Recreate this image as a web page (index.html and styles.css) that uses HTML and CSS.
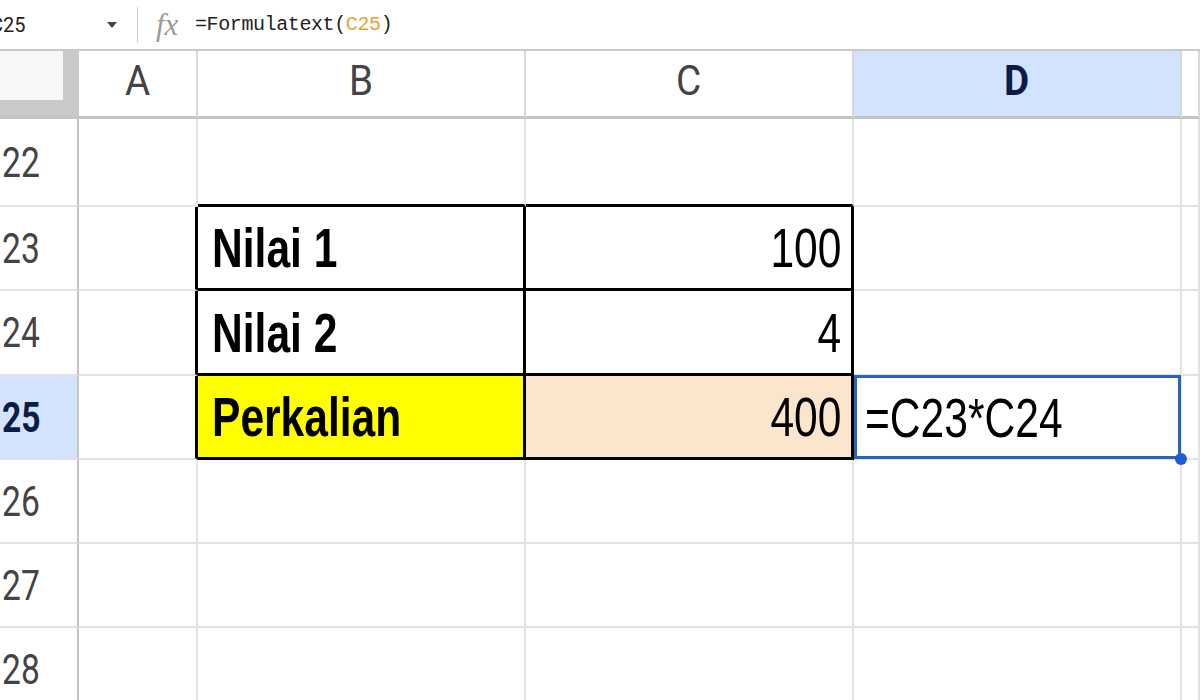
FILE: index.html
```html
<!DOCTYPE html>
<html lang="en">
<head>
    <meta charset="UTF-8">
    <meta name="viewport" content="width=device-width, initial-scale=1.0">
    <title>Formulatext</title>
    <link rel="stylesheet" href="styles.css">
</head>
<body>
    <div class="formula-bar">
        <div class="name-box">
            <span class="name">C25</span>
            <span class="caret"></span>
        </div>
        <div class="fx">fx</div>
        <div class="formula">=Formulatext(<span class="ref">C25</span>)</div>
    </div>

    <div class="sheet">
        <!-- column headers -->
        <div class="corner"><div class="corner-inner"></div></div>
        <div class="cell col-head"><span class="txt">A</span></div>
        <div class="cell col-head"><span class="txt">B</span></div>
        <div class="cell col-head"><span class="txt">C</span></div>
        <div class="cell col-head active"><span class="txt">D</span></div>
        <div class="cell col-head"></div>

        <!-- row 22 -->
        <div class="cell row-head"><span class="txt">22</span></div>
        <div class="cell"></div>
        <div class="cell black-b"></div>
        <div class="cell black-b"></div>
        <div class="cell"></div>
        <div class="cell"></div>

        <!-- row 23 -->
        <div class="cell row-head"><span class="txt">23</span></div>
        <div class="cell black-r"></div>
        <div class="cell boxed label"><span class="txt">Nilai 1</span></div>
        <div class="cell boxed num"><span class="txt">100</span></div>
        <div class="cell"></div>
        <div class="cell"></div>

        <!-- row 24 -->
        <div class="cell row-head"><span class="txt">24</span></div>
        <div class="cell black-r"></div>
        <div class="cell boxed label"><span class="txt">Nilai 2</span></div>
        <div class="cell boxed num"><span class="txt">4</span></div>
        <div class="cell"></div>
        <div class="cell"></div>

        <!-- row 25 -->
        <div class="cell row-head active"><span class="txt">25</span></div>
        <div class="cell black-r"></div>
        <div class="cell boxed label yellow"><span class="txt">Perkalian</span></div>
        <div class="cell boxed num peach"><span class="txt">400</span></div>
        <div class="cell plain selected"><span class="txt">=C23*C24</span><span class="handle"></span></div>
        <div class="cell"></div>

        <!-- row 26 -->
        <div class="cell row-head"><span class="txt">26</span></div>
        <div class="cell"></div>
        <div class="cell"></div>
        <div class="cell"></div>
        <div class="cell"></div>
        <div class="cell"></div>

        <!-- row 27 -->
        <div class="cell row-head"><span class="txt">27</span></div>
        <div class="cell"></div>
        <div class="cell"></div>
        <div class="cell"></div>
        <div class="cell"></div>
        <div class="cell"></div>

        <!-- row 28 -->
        <div class="cell row-head"><span class="txt">28</span></div>
        <div class="cell"></div>
        <div class="cell"></div>
        <div class="cell"></div>
        <div class="cell"></div>
        <div class="cell"></div>
    </div>
</body>
</html>
```

FILE: styles.css
```css
body {
    margin: 0;
    padding: 0;
    background-color: #fff;
    font-family: Roboto, 'Liberation Sans', Arial, sans-serif;
    overflow: hidden;
}

/* formula bar */

.formula-bar {
    display: flex;
    align-items: center;
    height: 49px;
    border-bottom: 2px solid #c9c9c9;
}

.name-box {
    display: flex;
    align-items: center;
    width: 138px;
    height: 36px;
    border-right: 1px solid #d4d4d4;
    box-sizing: border-box;
}

.name {
    margin-left: -10px;
    font-size: 20px;
    color: #222;
}

.caret {
    margin-left: auto;
    margin-right: 20px;
    width: 0;
    height: 0;
    border-left: 5px solid transparent;
    border-right: 5px solid transparent;
    border-top: 6px solid #444;
}

.fx {
    margin-left: 18px;
    width: 39px;
    font-family: 'Liberation Serif', serif;
    font-style: italic;
    font-size: 31px;
    line-height: 1;
    color: #9a9a9a;
}

.formula {
    font-family: 'Liberation Mono', monospace;
    font-size: 20px;
    letter-spacing: -0.4px;
    color: #222;
}

.formula .ref {
    color: #e9a23b;
}

/* grid */

.sheet {
    display: grid;
    grid-template-columns: 79px 119px 328px 328px 328px 1fr;
    grid-template-rows: 68px 88px 84px 85px 84px 84px 84px 84px;
}

.cell {
    display: flex;
    align-items: center;
    box-sizing: border-box;
    border-right: 2px solid #e2e2e2;
    border-bottom: 2px solid #e2e2e2;
    overflow: hidden;
    font-family: 'Liberation Sans', Arial, sans-serif;
    font-size: 56px;
    color: #000;
}

.txt {
    display: inline-block;
    white-space: nowrap;
    transform: scaleX(0.76);
    transform-origin: left center;
}

.corner {
    background-color: #c9c9c9;
    border-bottom: 3px solid #c4c4c4;
    box-sizing: border-box;
}

.corner-inner {
    width: 63px;
    height: 49px;
    background-color: #f7f7f7;
}

.col-head {
    justify-content: center;
    padding-bottom: 6px;
    font-family: Roboto, sans-serif;
    font-size: 42px;
    color: #444;
    border-right-color: #d8d8d8;
    border-bottom: 3px solid #c4c4c4;
}

.col-head .txt {
    transform: scaleX(0.92);
    transform-origin: center;
}

.row-head {
    padding-left: 2px;
    font-family: Roboto, sans-serif;
    font-size: 42px;
    color: #444;
    border-right-color: #c4c4c4;
}

.row-head .txt {
    transform: scaleX(0.8);
}

.active {
    background-color: #d3e3fd;
    color: #0b1d46;
    font-weight: bold;
}

/* the bordered block B23:C25 */

.black-b {
    border-bottom: 3px solid #000;
}

.black-r {
    border-right: 3px solid #000;
}

.boxed {
    border-right: 3px solid #000;
    border-bottom: 3px solid #000;
}

.label {
    padding-left: 14px;
    font-weight: bold;
}

.num {
    justify-content: flex-end;
    padding-right: 10px;
}

.num .txt {
    transform-origin: right center;
}

.plain {
    padding-left: 11px;
}

.yellow {
    background-color: #ffff00;
}

.peach {
    background-color: #fce5cd;
}

/* selected cell D25 */

.selected {
    position: relative;
    overflow: visible;
}

.selected::after {
    content: '';
    position: absolute;
    top: -1px;
    left: 0;
    right: -1px;
    bottom: -1px;
    border: 3px solid #2563c9;
}

.handle {
    position: absolute;
    right: -7px;
    bottom: -7px;
    width: 12px;
    height: 12px;
    border-radius: 50%;
    background-color: #1b5ed6;
    z-index: 1;
}
```
